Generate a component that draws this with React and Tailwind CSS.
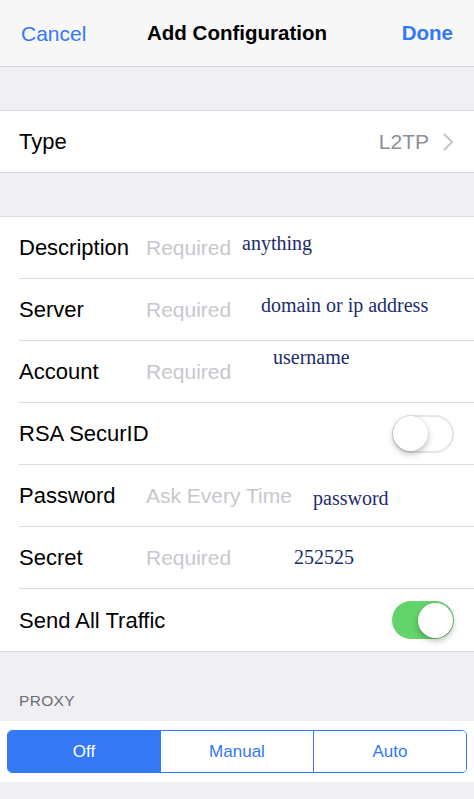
import { useState } from "react";

const font = { fontFamily: '"Liberation Sans", Arial, sans-serif' };

function Toggle({ on }) {
  return (
    <div
      className={`relative w-[62px] h-[38px] rounded-full ${
        on ? "bg-[#63d46a]" : "bg-white border-2 border-[#e5e5ea]"
      }`}
    >
      <div
        className={`absolute w-[35px] h-[35px] rounded-full bg-white shadow-[0_3px_6px_rgba(0,0,0,0.25),0_0_0_0.5px_rgba(0,0,0,0.08)] ${
          on ? "right-[1px] top-[1.5px]" : "left-[-1px] top-[-0.5px]"
        }`}
      />
    </div>
  );
}

// handwritten-ish notes drawn over the fields
function Note({ text, left, top }) {
  return (
    <span
      className="absolute text-[20px] leading-[20px] text-[#1d2c6e] whitespace-nowrap"
      style={{ left, top, fontFamily: '"Liberation Serif", "Times New Roman", serif' }}
    >
      {text}
    </span>
  );
}

function Row({ label, placeholder, note, toggle, last }) {
  return (
    <div className="pl-[19px] relative">
      <div
        className={`h-[62px] flex items-center pr-[20px] ${
          last ? "" : "border-b border-[#dcdce0]"
        }`}
      >
        <span className="w-[127px] shrink-0 whitespace-nowrap text-[22px] text-black">{label}</span>
        {placeholder && (
          <span className="whitespace-nowrap text-[21px] text-[#c7c7cd]">{placeholder}</span>
        )}
        {toggle !== undefined && (
          <div className="ml-auto">
            <Toggle on={toggle} />
          </div>
        )}
      </div>
      {note && <Note text={note.text} left={note.left} top={note.top} />}
    </div>
  );
}

export default function App() {
  const [proxy, setProxy] = useState("Off");

  const rows = [
    { label: "Description", placeholder: "Required", note: { text: "anything", left: 242, top: 16 } },
    { label: "Server", placeholder: "Required", note: { text: "domain or ip address", left: 261, top: 16 } },
    { label: "Account", placeholder: "Required", note: { text: "username", left: 273, top: 6 } },
    { label: "RSA SecurID", toggle: false },
    { label: "Password", placeholder: "Ask Every Time", note: { text: "password", left: 313, top: 23 } },
    { label: "Secret", placeholder: "Required", note: { text: "252525", left: 294, top: 20 } },
    { label: "Send All Traffic", toggle: true },
  ];

  return (
    <div className="w-[474px] h-[799px] bg-[#efeff4] overflow-hidden" style={font}>
      {/* Nav bar */}
      <div className="h-[67px] bg-[#f7f7f8] border-b border-[#d4d4d8] flex items-center px-[21px] pt-[1px]">
        <span className="flex-1 text-[21px] text-[#3478f6]">Cancel</span>
        <span className="text-[20.5px] font-bold text-black whitespace-nowrap">Add Configuration</span>
        <span className="flex-1 text-right text-[20.5px] font-bold text-[#3478f6]">Done</span>
      </div>

      <div className="h-[43px]" />

      <div className="bg-white border-y border-[#dcdce0]">
        <div className="h-[61px] flex items-center pl-[19px] pr-[20px]">
          <span className="text-[22px] text-black">Type</span>
          <span className="ml-auto text-[21px] text-[#8e8e93]">L2TP</span>
          <svg className="ml-[14px]" width="11" height="18" viewBox="0 0 11 18" fill="none">
            <path d="M1.5 1.5 L9 9 L1.5 16.5" stroke="#c7c7cc" strokeWidth="2.2" strokeLinecap="round" strokeLinejoin="round" />
          </svg>
        </div>
      </div>

      <div className="h-[43px]" />

      <div className="bg-white border-y border-[#dcdce0]">
        {rows.map((r, i) => (
          <Row key={r.label} {...r} last={i === rows.length - 1} />
        ))}
      </div>

      <div className="h-[69px] flex items-end pl-[19px] pb-[9px]">
        <span className="text-[15.5px] text-[#6d6d72] tracking-[0.3px]">PROXY</span>
      </div>

      <div className="bg-white h-[61px] px-[7px] pt-[9px]">
        <div className="flex h-[43px] border border-[#3478f6] rounded-[5px] overflow-hidden">
          {["Off", "Manual", "Auto"].map((opt, i) => (
            <button
              key={opt}
              onClick={() => setProxy(opt)}
              className={`flex-1 flex items-center justify-center text-[17px] ${
                i > 0 ? "border-l border-[#3478f6]" : ""
              } ${proxy === opt ? "bg-[#3478f6] text-white" : "bg-white text-[#3478f6]"}`}
            >
              {opt}
            </button>
          ))}
        </div>
      </div>
    </div>
  );
}
